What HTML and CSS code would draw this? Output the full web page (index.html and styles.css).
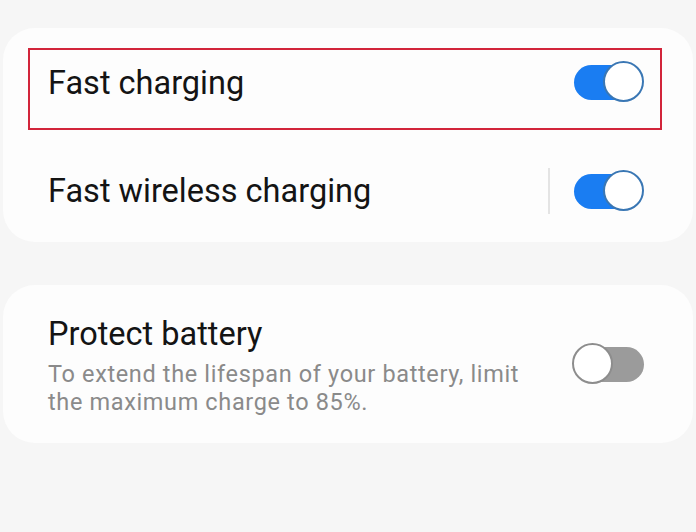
FILE: index.html
```html
<!DOCTYPE html>
<html>
<head>
<meta charset="utf-8">
<link rel="stylesheet" href="styles.css">
</head>
<body>
<div class="page">
  <section class="card card-top">
    <div class="row row-highlight">
      <span class="title">Fast charging</span>
      <span class="switch on"><span class="knob"></span></span>
    </div>
    <div class="row row-second">
      <span class="title">Fast wireless charging</span>
      <div class="controls">
        <span class="divider"></span>
        <span class="switch on"><span class="knob"></span></span>
      </div>
    </div>
  </section>
  <section class="card card-bottom">
    <div class="row row-protect">
      <div class="text">
        <div class="title">Protect battery</div>
        <div class="sub">To extend the lifespan of your battery, limit the maximum charge to 85%.</div>
      </div>
      <span class="switch off"><span class="knob"></span></span>
    </div>
  </section>
</div>
</body>
</html>
```
FILE: styles.css
```css
html, body {
  margin: 0;
  padding: 0;
  background: #f6f6f6;
  font-family: Roboto, "Liberation Sans", sans-serif;
}
.page {
  width: 696px;
  height: 532px;
  padding: 28px 3px 0;
  box-sizing: border-box;
  display: flex;
  flex-direction: column;
  gap: 43px;
}
.card {
  background: #fdfdfd;
  border-radius: 32px;
}
.card-top {
  padding: 20px 31px 0 25px;
  height: 214px;
  box-sizing: border-box;
}
.row {
  display: flex;
  align-items: center;
  justify-content: space-between;
}
.row-highlight {
  height: 82px;
  box-sizing: border-box;
  border: 2px solid #d2253b;
  padding: 0 16px 12px 18px;
}
.row-highlight .switch { margin-top: -2px; }
.row-second {
  height: 112px;
  box-sizing: border-box;
  padding: 10px 18px 0 20px;
}
.title {
  font-size: 32.5px;
  line-height: 38px;
  color: #141414;
}
.controls {
  display: flex;
  align-items: center;
  gap: 24px;
}
.divider {
  width: 2px;
  height: 46px;
  background: #e4e4e4;
}
.switch {
  position: relative;
  width: 70px;
  height: 42px;
  display: block;
  flex-shrink: 0;
}
.switch::before {
  content: "";
  position: absolute;
  left: 0;
  right: 1px;
  top: 4px;
  height: 35px;
  border-radius: 18px;
  background: #1a7df2;
}
.switch .knob {
  position: absolute;
  top: 0;
  width: 41px;
  height: 41px;
  box-sizing: border-box;
  border-radius: 50%;
  background: #fff;
  border: 2px solid #3a77b4;
}
.switch.on .knob { right: 0; }
.switch.off { width: 72px; margin-bottom: 3px; }
.switch.off::before { background: #9b9b9b; left: 2px; right: 0; }
.switch.off .knob { left: 0; border-color: #8d8d8d; }
.card-bottom {
  height: 158px;
  box-sizing: border-box;
  padding: 30px 49px 0 45px;
}
.row-protect { width: 100%; }
.row-protect .text { width: 500px; }
.sub {
  font-size: 23.5px;
  letter-spacing: 0.64px;
  color: #8a8a8a;
  line-height: 28.5px;
  margin-top: 6.5px;
}
```
